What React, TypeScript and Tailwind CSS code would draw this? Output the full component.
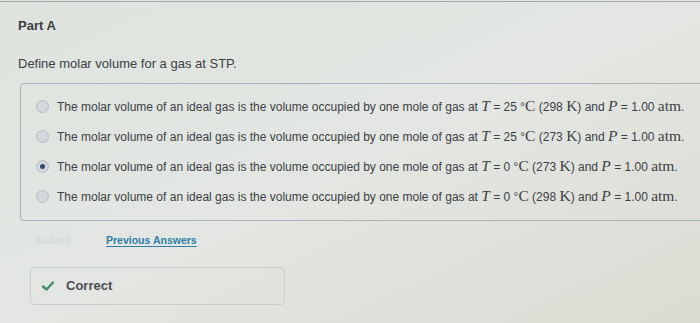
import React from 'react';

const options = [
  { t: '25', k: '298', selected: false },
  { t: '25', k: '273', selected: false },
  { t: '0', k: '273', selected: true },
  { t: '0', k: '298', selected: false },
];

const Serif = ({ children, italic }: { children: React.ReactNode; italic?: boolean }) => (
  <span className={`font-['Liberation_Serif',serif] text-[15.5px] ${italic ? 'italic' : ''}`}>{children}</span>
);

const Radio = ({ selected }: { selected: boolean }) => (
  <span className="w-[13px] h-[13px] rounded-full border border-[#b7bcc1] bg-[#d4d8dc] flex items-center justify-center shrink-0">
    {selected && <span className="w-[5px] h-[5px] rounded-full bg-[#33496b]" />}
  </span>
);

export default function App() {
  return (
    <div className="w-[700px] h-[323px] overflow-hidden bg-gradient-to-br from-[#dfe4df] via-[#e3e6e2] to-[#dcdbd3] text-[#3c3f45] font-['Liberation_Sans',Arial,sans-serif]">
      <div className="mt-[1px] border-t border-[#a3a7ab]" />
      {/* Header */}
      <div className="pl-[18px] pt-[15px] text-[13px] font-bold text-[#3a3d42] leading-[18px]">Part A</div>
      <div className="pl-[18px] pt-[20px] text-[13px] leading-[18px]">Define molar volume for a gas at STP.</div>

      {/* Options box */}
      <div className="ml-[20px] mt-[10px] w-[720px] h-[138px] border border-[#aab0b4] rounded-tl-[4px] rounded-bl-[4px] pt-[14px] flex flex-col gap-[14px]">
        {options.map((o, i) => (
          <div key={i} className="flex items-center gap-[8px] pl-[15px] h-[16px] text-[12px] whitespace-nowrap">
            <Radio selected={o.selected} />
            <span>
              The molar volume of an ideal gas is the volume occupied by one mole of gas at{' '}
              <Serif italic>T</Serif> = {o.t} °<Serif>C</Serif> ({o.k} <Serif>K</Serif>) and <Serif italic>P</Serif> = 1.00{' '}
              <Serif>atm</Serif>.
            </span>
          </div>
        ))}
      </div>

      {/* Actions */}
      <div className="flex items-center h-[16px] mt-[12px] pl-[35px] text-[10.5px] font-bold">
        <span className="text-[#d6dad8] w-[71px]">Submit</span>
        <span className="text-[#2f7fa6] underline underline-offset-2">Previous Answers</span>
      </div>

      {/* Feedback */}
      <div className="ml-[30px] mt-[18px] w-[255px] h-[38px] border border-[#c8cdcf] rounded-[4px] flex items-center pl-[11px] gap-[12px]">
        <svg width="12" height="10" viewBox="0 0 12 10">
          <path d="M1 5.5 L4.5 8.5 L11 1.5" fill="none" stroke="#3f8f68" strokeWidth="2.4" strokeLinecap="round" strokeLinejoin="round" />
        </svg>
        <span className="text-[13px] font-bold text-[#4a4d55]">Correct</span>
      </div>
    </div>
  );
}
